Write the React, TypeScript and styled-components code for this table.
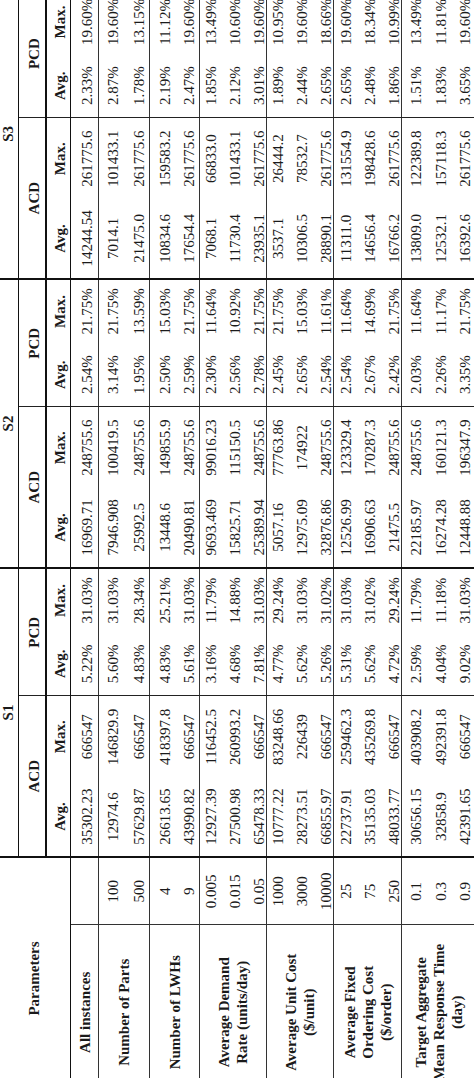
import React from "react";
import styled, { createGlobalStyle } from "styled-components";

const GlobalStyle = createGlobalStyle`
  html, body {
    margin: 0;
    padding: 0;
    background: #fff;
  }
`;

// the printed table is turned on its side, so it is laid out upright and rotated
const Page = styled.div`
  width: 474px;
  height: 1078px;
  overflow: hidden;
  background: #fff;
`;

const Turned = styled.div`
  width: 1078px;
  height: 474px;
  overflow: hidden;
  transform-origin: 0 0;
  transform: translateY(1078px) rotate(-90deg);
`;

const Table = styled.table`
  border-collapse: collapse;
  table-layout: fixed;
  width: 1109px;
  margin: -3px 0 0 -21px;
  font-family: "Liberation Serif", "Times New Roman", serif;
  font-size: 15px;
  color: #1a1a1a;
`;

type Edge = "group" | "half" | "thin" | "none";

const edge = (e: Edge) =>
  e === "group"
    ? "2px solid #111"
    : e === "half"
    ? "1px solid #222"
    : e === "thin"
    ? "1px solid #333"
    : "none";

const Head = styled.th<{ $edge: Edge; $under: number }>`
  padding: 0;
  font-weight: bold;
  text-align: center;
  vertical-align: middle;
  border-left: ${(p) => edge(p.$edge)};
  border-bottom: ${(p) => p.$under}px solid #111;
`;

const Cell = styled.td<{ $edge: Edge }>`
  padding: 0;
  text-align: center;
  vertical-align: middle;
  border-left: ${(p) => edge(p.$edge)};
  border-top: 1px solid #333;
`;

const LabelCell = styled(Cell)`
  font-weight: bold;
`;

const Box = styled.div<{ $h: number; $lh?: number; $shift?: number }>`
  height: ${(p) => p.$h}px;
  box-sizing: border-box;
  padding-top: ${(p) => p.$shift ?? 0}px;
  display: flex;
  flex-direction: column;
  justify-content: center;
  align-items: center;
  line-height: ${(p) => p.$lh ?? 18}px;
  white-space: nowrap;
`;

const cols: string[][] = [
  // S1 ACD
  ["35302.23", "12974.6", "57629.87", "26613.65", "43990.82", "12927.39", "27500.98", "65478.33", "10777.22", "28273.51", "66855.97", "22737.91", "35135.03", "48033.77", "30656.15", "32858.9", "42391.65"],
  ["666547", "146829.9", "666547", "418397.8", "666547", "116452.5", "260993.2", "666547", "83248.66", "226439", "666547", "259462.3", "435269.8", "666547", "403908.2", "492391.8", "666547"],
  // S1 PCD
  ["5.22%", "5.60%", "4.83%", "4.83%", "5.61%", "3.16%", "4.68%", "7.81%", "4.77%", "5.62%", "5.26%", "5.31%", "5.62%", "4.72%", "2.59%", "4.04%", "9.02%"],
  ["31.03%", "31.03%", "28.34%", "25.21%", "31.03%", "11.79%", "14.88%", "31.03%", "29.24%", "31.03%", "31.02%", "31.03%", "31.02%", "29.24%", "11.79%", "11.18%", "31.03%"],
  // S2 ACD
  ["16969.71", "7946.908", "25992.5", "13448.6", "20490.81", "9693.469", "15825.71", "25389.94", "5057.16", "12975.09", "32876.86", "12526.99", "16906.63", "21475.5", "22185.97", "16274.28", "12448.88"],
  ["248755.6", "100419.5", "248755.6", "149855.9", "248755.6", "99016.23", "115150.5", "248755.6", "77763.86", "174922", "248755.6", "123329.4", "170287.3", "248755.6", "248755.6", "160121.3", "196347.9"],
  // S2 PCD
  ["2.54%", "3.14%", "1.95%", "2.50%", "2.59%", "2.30%", "2.56%", "2.78%", "2.45%", "2.65%", "2.54%", "2.54%", "2.67%", "2.42%", "2.03%", "2.26%", "3.35%"],
  ["21.75%", "21.75%", "13.59%", "15.03%", "21.75%", "11.64%", "10.92%", "21.75%", "21.75%", "15.03%", "11.61%", "11.64%", "14.69%", "21.75%", "11.64%", "11.17%", "21.75%"],
  // S3 ACD
  ["14244.54", "7014.1", "21475.0", "10834.6", "17654.4", "7068.1", "11730.4", "23935.1", "3537.1", "10306.5", "28890.1", "11311.0", "14656.4", "16766.2", "13809.0", "12532.1", "16392.6"],
  ["261775.6", "101433.1", "261775.6", "159583.2", "261775.6", "66833.0", "101433.1", "261775.6", "26444.2", "78532.7", "261775.6", "131554.9", "198428.6", "261775.6", "122389.8", "157118.3", "261775.6"],
  // S3 PCD
  ["2.33%", "2.87%", "1.78%", "2.19%", "2.47%", "1.85%", "2.12%", "3.01%", "1.89%", "2.44%", "2.65%", "2.65%", "2.48%", "1.86%", "1.51%", "1.83%", "3.65%"],
  ["19.60%", "19.60%", "13.15%", "11.12%", "19.60%", "13.49%", "10.60%", "19.60%", "10.95%", "19.60%", "18.66%", "19.60%", "18.34%", "10.99%", "13.49%", "11.81%", "19.60%"],
];

type Group = {
  label: string[];
  values: string[];
  h: number;
  pitch: number;
};

const groups: Group[] = [
  { label: ["All instances"], values: [""], h: 27, pitch: 24 },
  { label: ["Number of Parts"], values: ["100", "500"], h: 50, pitch: 26 },
  { label: ["Number of LWHs"], values: ["4", "9"], h: 49, pitch: 24 },
  { label: ["Average Demand", "Rate (units/day)"], values: ["0.005", "0.015", "0.05"], h: 66, pitch: 24 },
  { label: ["Average Unit Cost", "($/unit)"], values: ["1000", "3000", "10000"], h: 66, pitch: 24 },
  { label: ["Average Fixed", "Ordering Cost", "($/order)"], values: ["25", "75", "250"], h: 67, pitch: 24 },
  { label: ["Target Aggregate", "Mean Response Time", "(day)"], values: ["0.1", "0.3", "0.9"], h: 74, pitch: 24.5 },
];

const edgeFor = (ci: number): Edge => (ci % 4 === 0 ? "group" : ci % 4 === 2 ? "half" : "none");

function GroupRow({ g, start }: { g: Group; start: number }) {
  const n = g.values.length;
  return (
    <tr>
      <LabelCell $edge="none">
        <Box $h={g.h} $lh={18}>
          {g.label.map((l) => (
            <span key={l}>{l}</span>
          ))}
        </Box>
      </LabelCell>
      <Cell $edge="thin">
        <Box $h={g.h} $lh={g.pitch} $shift={4}>
          {g.values.map((v, i) => (
            <span key={i}>{v}</span>
          ))}
        </Box>
      </Cell>
      {cols.map((col, ci) => (
        <Cell key={ci} $edge={edgeFor(ci)}>
          <Box $h={g.h} $lh={g.pitch} $shift={4}>
            {col.slice(start, start + n).map((v, i) => (
              <span key={i}>{v}</span>
            ))}
          </Box>
        </Cell>
      ))}
    </tr>
  );
}

export default function App() {
  const starts: number[] = [];
  groups.reduce((acc, g) => {
    starts.push(acc);
    return acc + g.values.length;
  }, 0);

  return (
    <Page>
      <GlobalStyle />
      <Turned>
        <Table>
          <colgroup>
            <col style={{ width: 174 }} />
            <col style={{ width: 68 }} />
            {[0, 1, 2].map((s) => (
              <React.Fragment key={s}>
                <col style={{ width: 80 }} />
                <col style={{ width: 81 }} />
                <col style={{ width: 64 }} />
                <col style={{ width: 64 }} />
              </React.Fragment>
            ))}
          </colgroup>
          <thead>
            <tr>
              <Head colSpan={2} rowSpan={3} $edge="none" $under={1}>
                <Box $h={72}>Parameters</Box>
              </Head>
              {["S1", "S2", "S3"].map((s) => (
                <Head key={s} colSpan={4} $edge="group" $under={1}>
                  <Box $h={21}>{s}</Box>
                </Head>
              ))}
            </tr>
            <tr>
              {[0, 1, 2].map((s) => (
                <React.Fragment key={s}>
                  <Head colSpan={2} $edge="group" $under={2}>
                    <Box $h={26} $shift={4}>ACD</Box>
                  </Head>
                  <Head colSpan={2} $edge="half" $under={2}>
                    <Box $h={26} $shift={4}>PCD</Box>
                  </Head>
                </React.Fragment>
              ))}
            </tr>
            <tr>
              {cols.map((_, ci) => (
                <Head key={ci} $edge={edgeFor(ci)} $under={1}>
                  <Box $h={23} $shift={2}>{ci % 2 === 0 ? "Avg." : "Max."}</Box>
                </Head>
              ))}
            </tr>
          </thead>
          <tbody>
            {groups.map((g, gi) => (
              <GroupRow key={gi} g={g} start={starts[gi]} />
            ))}
          </tbody>
        </Table>
      </Turned>
    </Page>
  );
}
